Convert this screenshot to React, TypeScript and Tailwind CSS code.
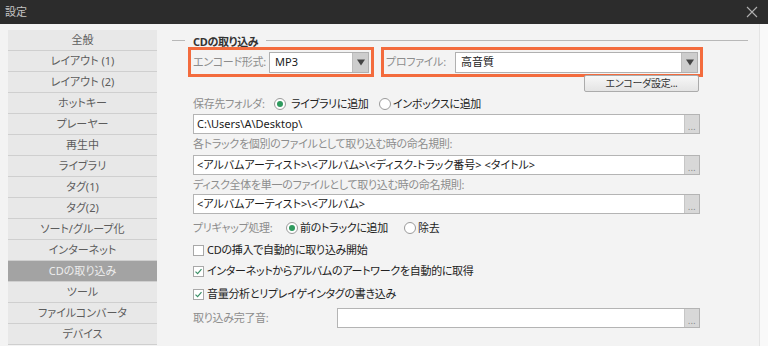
import React from "react"

const navItems = [
  "全般",
  "レイアウト (1)",
  "レイアウト (2)",
  "ホットキー",
  "プレーヤー",
  "再生中",
  "ライブラリ",
  "タグ(1)",
  "タグ(2)",
  "ソート/グループ化",
  "インターネット",
  "CDの取り込み",
  "ツール",
  "ファイルコンバータ",
  "デバイス",
]

const font = "font-['Noto_Sans','Noto_Sans_CJK_JP',sans-serif] [font-feature-settings:'palt']"

function Radio({ on }: { on?: boolean }) {
  return (
    <span className="w-[12px] h-[12px] rounded-full border border-[#9a9a9a] bg-white flex items-center justify-center shrink-0">
      {on && <span className="w-[6px] h-[6px] rounded-full bg-[#2f9a5e]" />}
    </span>
  )
}

function Check({ on }: { on?: boolean }) {
  return (
    <span className="w-[11px] h-[11px] border border-[#a8a8a8] bg-white flex items-center justify-center shrink-0">
      {on && (
        <svg width="9" height="9" viewBox="0 0 9 9" fill="none" stroke="#3a8f66" strokeWidth="1.2">
          <path d="M1.5 4.6 L3.6 6.6 L7.5 2.2" />
        </svg>
      )}
    </span>
  )
}

function Combo({ value, className }: { value: string; className: string }) {
  return (
    <div className={`h-[21px] border border-[#b0b0b0] bg-white flex items-stretch ${className}`}>
      <div className="flex-1 flex items-center pl-[5px] text-[#1a1a1a] tracking-normal">{value}</div>
      <div className="w-[16px] bg-[#cdcdcd] border-l border-[#bdbdbd] flex items-center justify-center">
        <svg width="8" height="7" viewBox="0 0 8 7">
          <path d="M0 0.5 H8 L4 6.5 Z" fill="#444" />
        </svg>
      </div>
    </div>
  )
}

function Field({ value, className = "" }: { value?: string; className?: string }) {
  return (
    <div className={`h-[20px] border border-[#b4b4b4] bg-white flex items-stretch ${className}`}>
      <div className="flex-1 flex items-center pl-[3px] text-[#1a1a1a] tracking-normal whitespace-nowrap overflow-hidden">{value}</div>
      <div className="w-[15px] bg-[#d8d8d8] border-l border-[#c6c6c6] flex items-end justify-center pb-[2px]">
        <span className="text-[8px] leading-none text-[#777] tracking-[0.5px]">...</span>
      </div>
    </div>
  )
}

export default function App() {
  return (
    <div className={`w-[768px] h-[346px] overflow-hidden bg-[#f3f3f3] flex flex-col ${font}`}>
      {/* title bar */}
      <div className="h-[24px] bg-[#2c2c2c] flex items-center justify-between pl-[5px] pr-[10px] shrink-0">
        <span className="text-[11px] text-[#c4c4c4]">設定</span>
        <svg width="12" height="12" viewBox="0 0 12 12" stroke="#b0b0b0" strokeWidth="1.1">
          <path d="M1 1 L11 11 M11 1 L1 11" />
        </svg>
      </div>

      <div className="flex flex-1 min-h-0">
        {/* sidebar */}
        <div className="w-[157px] pl-[8px] pt-[6px] shrink-0">
          {navItems.map((item) => {
            const active = item === "CDの取り込み"
            return (
              <div
                key={item}
                className={`h-[21px] border-b border-[#cfcfcf] flex items-center justify-center text-[11px] whitespace-nowrap ${
                  active ? "bg-[#a3a3a3] text-[#ededed]" : "bg-[#e8e8e8] text-[#5c5c5c]"
                }`}
              >
                {item}
              </div>
            )
          })}
        </div>

        {/* content */}
        <div className="flex-1 pl-[15px] pt-[10px] flex flex-col text-[11px] tracking-[-0.3px] whitespace-nowrap">
          <div className="h-[13px] flex items-center w-[576px]">
            <span className="w-[13px] h-px bg-[#b8b8b8]" />
            <span className="px-[8px] pt-[2px] font-bold text-[#333] leading-none">CDの取り込み</span>
            <span className="flex-1 h-px bg-[#b8b8b8]" />
          </div>

          <div className="pl-[21px] flex flex-col">
            <div className="h-[30px] flex -ml-[5px] gap-[7px]">
              <div className="w-[186px] border-[3px] border-[#f36b3d] flex items-center pl-[2px] pr-[2px]">
                <span className="w-[76px] text-[#8d8d8d]">エンコード形式:</span>
                <Combo value="MP3" className="flex-1" />
              </div>
              <div className="w-[322px] border-[3px] border-[#f36b3d] flex items-center pl-[2px] pr-[2px]">
                <span className="w-[69px] text-[#8d8d8d]">プロファイル:</span>
                <Combo value="高音質" className="flex-1" />
              </div>
            </div>

            <div className="h-[17px] -mt-[2px] flex justify-end w-[506px]">
              <div className="w-[115px] h-[17px] border border-[#ababab] rounded-[2px] bg-gradient-to-b from-[#f7f7f7] to-[#e4e4e4] flex items-center justify-center text-[10px] text-[#333]">
                エンコーダ設定...
              </div>
            </div>

            <div className="h-[16px] mt-[4px] flex items-center">
              <span className="w-[81px] text-[#8d8d8d]">保存先フォルダ:</span>
              <div className="w-[105px] flex items-center gap-[5px]">
                <Radio on />
                <span className="text-[#222]">ライブラリに追加</span>
              </div>
              <div className="flex items-center gap-[2px]">
                <Radio />
                <span className="text-[#222]">インボックスに追加</span>
              </div>
            </div>

            <Field value="C:\Users\A\Desktop\" className="mt-[2px] w-[507px]" />

            <div className="h-[14px] mt-[3px] flex items-center text-[#8d8d8d]">
              各トラックを個別のファイルとして取り込む時の命名規則:
            </div>
            <Field value="<アルバムアーティスト>\<アルバム>\<ディスク-トラック番号> <タイトル>" className="mt-[4px] w-[507px]" />

            <div className="h-[14px] mt-[3px] flex items-center text-[#8d8d8d]">
              ディスク全体を単一のファイルとして取り込む時の命名規則:
            </div>
            <Field value="<アルバムアーティスト>\<アルバム>" className="mt-[2px] w-[507px]" />

            <div className="h-[16px] mt-[6px] flex items-center">
              <span className="w-[93px] text-[#8d8d8d]">プリギャップ処理:</span>
              <div className="w-[118px] flex items-center gap-[2px]">
                <Radio on />
                <span className="text-[#222]">前のトラックに追加</span>
              </div>
              <div className="flex items-center gap-[2px]">
                <Radio />
                <span className="text-[#222]">除去</span>
              </div>
            </div>

            <div className="h-[16px] mt-[6px] flex items-center gap-[3px]">
              <Check />
              <span className="text-[#222]">CDの挿入で自動的に取り込み開始</span>
            </div>
            <div className="h-[16px] mt-[5px] flex items-center gap-[3px]">
              <Check on />
              <span className="text-[#222]">インターネットからアルバムのアートワークを自動的に取得</span>
            </div>
            <div className="h-[16px] mt-[7px] flex items-center gap-[3px]">
              <Check on />
              <span className="text-[#222]">音量分析とリプレイゲインタグの書き込み</span>
            </div>

            <div className="h-[20px] mt-[6px] flex items-center">
              <span className="w-[144px] text-[#8d8d8d]">取り込み完了音:</span>
              <Field className="w-[363px]" />
            </div>
          </div>
        </div>

        {/* right edge strip */}
        <div className="w-[9px] bg-[#f9f9f9] border-l border-[#e4e4e4] shrink-0" />
      </div>
    </div>
  )
}
